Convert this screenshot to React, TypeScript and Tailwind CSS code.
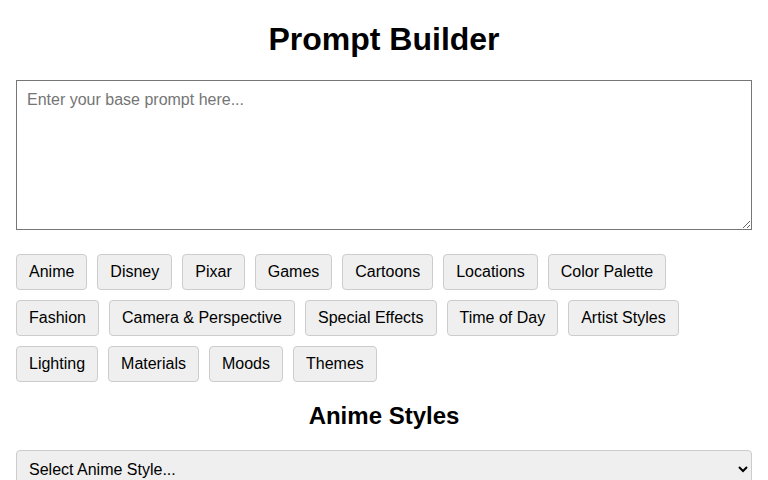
import React from "react";

const rows = [
  ["Anime", "Disney", "Pixar", "Games", "Cartoons", "Locations", "Color Palette"],
  ["Fashion", "Camera & Perspective", "Special Effects", "Time of Day", "Artist Styles"],
  ["Lighting", "Materials", "Moods", "Themes"],
];

export default function App() {
  return (
    <div className="min-h-screen bg-white px-4 text-black" style={{ fontFamily: '"Liberation Sans", Arial, sans-serif' }}>
      <h1 className="pt-[20px] pb-[22px] text-center text-[32px] font-bold leading-[38px]">Prompt Builder</h1>
      <textarea
        placeholder="Enter your base prompt here..."
        className="block h-[150px] w-full resize-y border border-[#767676] p-[10px] text-[16px] leading-[18px] placeholder:text-[#757575]"
      />
      <div className="mt-[24px] flex flex-col gap-[10px]">
        {rows.map((r, i) => (
          <div key={i} className="flex gap-[10px]">
            {r.map((b) => (
              <button
                key={b}
                className="rounded-[4px] border border-[#cccccc] bg-[#efefef] px-3 py-2 text-[16px] leading-[18px] text-black"
              >
                {b}
              </button>
            ))}
          </div>
        ))}
      </div>
      <h2 className="pt-[20px] pb-[20px] text-center text-[24px] font-bold leading-[28px]">Anime Styles</h2>
      <select className="block h-[38px] w-full rounded-[4px] border border-[#cccccc] bg-[#efefef] px-[8px] text-[16px] text-black">
        <option>Select Anime Style...</option>
      </select>
    </div>
  );
}
